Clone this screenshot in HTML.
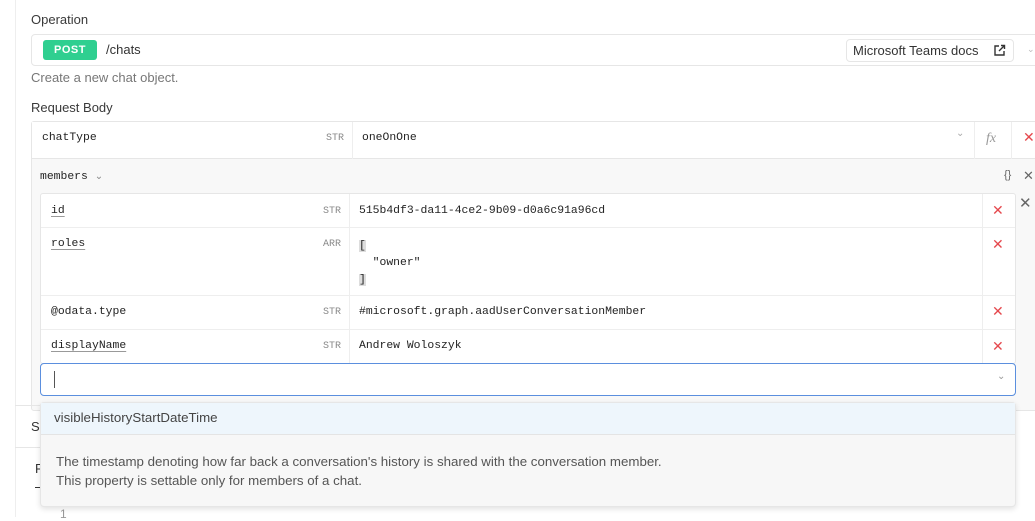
<!DOCTYPE html>
<html><head><style>
*{box-sizing:border-box;margin:0;padding:0}
body{width:1035px;height:517px;overflow:hidden;background:#fff;font-family:"Liberation Sans",sans-serif;color:#333;position:relative;font-size:13px}
.a{position:absolute}
.mono{font-family:"Liberation Mono",monospace;font-size:11.4px;color:#222;margin-top:2px}
.lbl{font-size:13px;color:#3a3a3a}
.typ{font-family:"Liberation Mono",monospace;font-size:10px;color:#888}
.x{color:#e5484d;font-size:14px}
u{text-decoration:underline;text-decoration-color:#999;text-underline-offset:3px}
</style></head><body>
<div class="a" style="left:15px;top:0;width:1px;height:517px;background:#eee"></div>
<div class="a lbl" style="left:31px;top:12px">Operation</div>
<div class="a" style="left:31px;top:34px;width:1010px;height:32px;border:1px solid #e6e6e6;border-radius:4px"></div>
<div class="a" style="left:43px;top:40px;width:54px;height:20px;background:#2fcf90;border-radius:3px;color:#fff;font-size:11px;font-weight:bold;text-align:center;line-height:20px;letter-spacing:.5px">POST</div>
<div class="a" style="left:106px;top:42px;color:#333">/chats</div>
<div class="a" style="left:846px;top:39px;width:168px;height:23px;border:1px solid #e6e6e6;border-radius:4px;padding:3px 6px;color:#333">Microsoft Teams docs
<svg class="a" style="left:146px;top:4px" width="13" height="13" viewBox="0 0 13 13" fill="none" stroke="#333" stroke-width="1.4"><path d="M6 2H2v9h9V7M8 1.5h3.5V5M11.5 1.5L6 7"/></svg></div>
<div class="a" style="left:1027px;top:44px;color:#bbb;font-size:9px">⌄</div>
<div class="a" style="left:31px;top:70px;color:#777">Create a new chat object.</div>
<div class="a lbl" style="left:31px;top:100px">Request Body</div>
<div class="a" style="left:31px;top:121px;width:1010px;height:290px;border:1px solid #e6e6e6;border-radius:3px;background:#f8f8f8"></div>
<div class="a" style="left:32px;top:122px;width:1003px;height:37px;background:#fff;border-bottom:1px solid #e6e6e6"></div>
<div class="a mono" style="left:42px;top:130px">chatType</div>
<div class="a typ" style="left:326px;top:133px">STR</div>
<div class="a" style="left:352px;top:122px;width:1px;height:37px;background:#eee"></div>
<div class="a mono" style="left:362px;top:130px">oneOnOne</div>
<div class="a" style="left:956px;top:128px;color:#aaa;font-size:10px">⌄</div>
<div class="a" style="left:974px;top:122px;width:1px;height:37px;background:#eee"></div>
<div class="a" style="left:986px;top:131px;color:#999;font-style:italic;font-family:'Liberation Serif',serif;font-size:14px">fx</div>
<div class="a" style="left:1011px;top:122px;width:1px;height:37px;background:#eee"></div>
<div class="a x" style="left:1023px;top:129px">✕</div>
<div class="a mono" style="left:40px;top:169px">members <span style="color:#888;font-size:10px">⌄</span></div>
<div class="a" style="left:1004px;top:169px;color:#666;font-size:11px">{}</div>
<div class="a" style="left:1023px;top:168px;color:#666;font-size:13px">✕</div>
<div class="a" style="left:1019px;top:194px;color:#666;font-size:15px">✕</div>
<div class="a" style="left:40px;top:193px;width:976px;height:171px;background:#fff;border:1px solid #e6e6e6;border-radius:3px"></div>
<div class="a" style="left:349px;top:194px;width:1px;height:169px;background:#eee"></div>
<div class="a" style="left:982px;top:194px;width:1px;height:169px;background:#eee"></div>
<div class="a" style="left:41px;top:227px;width:974px;height:1px;background:#eee"></div>
<div class="a" style="left:41px;top:295px;width:974px;height:1px;background:#eee"></div>
<div class="a" style="left:41px;top:329px;width:974px;height:1px;background:#eee"></div>
<div class="a mono" style="left:51px;top:203px"><u>id</u></div><div class="a typ" style="left:323px;top:206px">STR</div>
<div class="a mono" style="left:359px;top:203px">515b4df3-da11-4ce2-9b09-d0a6c91a96cd</div><div class="a x" style="left:992px;top:202px">✕</div>
<div class="a mono" style="left:51px;top:236px"><u>roles</u></div><div class="a typ" style="left:323px;top:239px">ARR</div>
<div class="a mono" style="left:359px;top:236px;line-height:17px"><span style="background:#ddd">[</span><br>&nbsp;&nbsp;"owner"<br><span style="background:#ddd">]</span></div><div class="a x" style="left:992px;top:236px">✕</div>
<div class="a mono" style="left:51px;top:304px">@odata.type</div><div class="a typ" style="left:323px;top:307px">STR</div>
<div class="a mono" style="left:359px;top:304px">#microsoft.graph.aadUserConversationMember</div><div class="a x" style="left:992px;top:303px">✕</div>
<div class="a mono" style="left:51px;top:338px"><u>displayName</u></div><div class="a typ" style="left:323px;top:341px">STR</div>
<div class="a mono" style="left:359px;top:338px">Andrew Woloszyk</div><div class="a x" style="left:992px;top:338px">✕</div>
<div class="a" style="left:40px;top:363px;width:976px;height:33px;background:#fff;border:1px solid #5b8fde;border-radius:4px"></div>
<div class="a" style="left:54px;top:371px;width:1px;height:17px;background:#555"></div>
<div class="a" style="left:997px;top:371px;color:#999;font-size:10px">⌄</div>
<div class="a" style="left:15px;top:405px;width:25px;height:1px;background:#e6e6e6"></div>
<div class="a" style="left:31px;top:419px;color:#333">So</div>
<div class="a" style="left:15px;top:447px;width:25px;height:1px;background:#e6e6e6"></div>
<div class="a" style="left:35px;top:461px;color:#333">R</div>
<div class="a" style="left:35px;top:487px;width:6px;height:1px;background:#333"></div>
<div class="a" style="left:60px;top:507px;color:#999;font-size:12px">1</div>
<div class="a" style="left:40px;top:402px;width:976px;height:105px;background:#f7f7f7;border:1px solid #e6e6e6;border-radius:4px;box-shadow:0 2px 6px rgba(0,0,0,.12)"></div>
<div class="a" style="left:41px;top:403px;width:974px;height:32px;background:#eef6fc;border-bottom:1px solid #e4e4e4"></div>
<div class="a" style="left:54px;top:410px;color:#444;font-size:13.3px">visibleHistoryStartDateTime</div>
<div class="a" style="left:56px;top:452px;color:#555;font-size:13.3px;line-height:19px">The timestamp denoting how far back a conversation's history is shared with the conversation member.<br>This property is settable only for members of a chat.</div>
</body></html>
